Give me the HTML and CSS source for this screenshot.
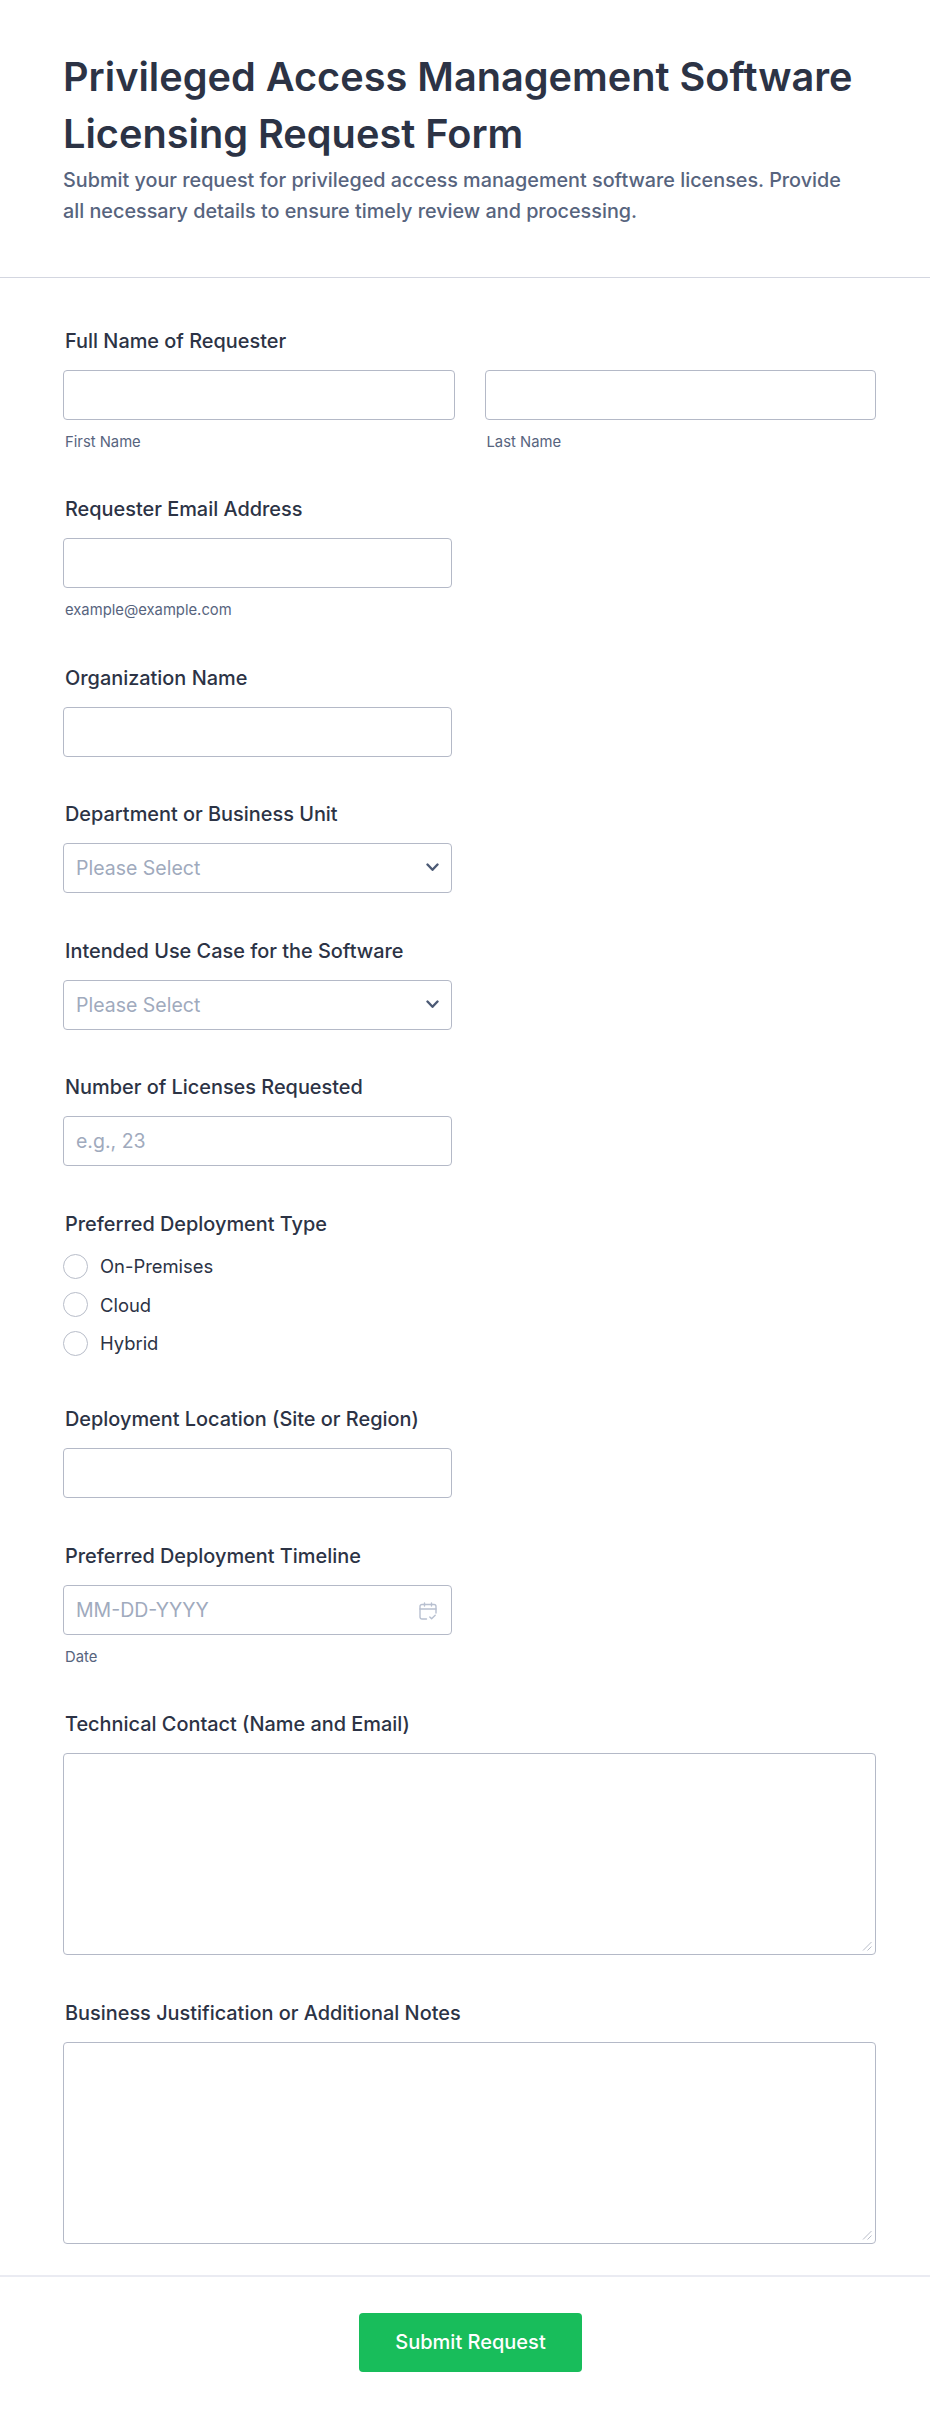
FILE: index.html
```html
<!DOCTYPE html>
<html lang="en">
<head>
<meta charset="utf-8">
<title>Privileged Access Management Software Licensing Request Form</title>
<link rel="stylesheet" href="styles.css">
</head>
<body>
<form class="form">
  <header class="head">
    <h1 class="title">Privileged Access Management Software Licensing Request Form</h1>
    <p class="subtitle">Submit your request for privileged access management software licenses. Provide all necessary details to ensure timely review and processing.</p>
  </header>
  <div class="fields">
    <div class="field">
      <div class="label">Full Name of Requester</div>
      <div class="name-row">
        <div class="name-col"><input class="control control-full" type="text"><div class="sub">First Name</div></div>
        <div class="name-col"><input class="control control-full" type="text"><div class="sub">Last Name</div></div>
      </div>
    </div>
    <div class="field">
      <div class="label">Requester Email Address</div>
      <input class="control" type="text">
      <div class="sub">example@example.com</div>
    </div>
    <div class="field">
      <div class="label">Organization Name</div>
      <input class="control" type="text">
    </div>
    <div class="field">
      <div class="label">Department or Business Unit</div>
      <div class="wrap">
        <select class="control select"><option>Please Select</option></select>
        <svg class="chevron" width="13" height="9" viewBox="0 0 13 9"><path d="M1.5 1.5 6.500 6.800l5-5.300" fill="none" stroke="#4c5a75" stroke-width="2.4" stroke-linecap="round" stroke-linejoin="round"/></svg>
      </div>
    </div>
    <div class="field">
      <div class="label">Intended Use Case for the Software</div>
      <div class="wrap">
        <select class="control select"><option>Please Select</option></select>
        <svg class="chevron" width="13" height="9" viewBox="0 0 13 9"><path d="M1.5 1.5 6.500 6.800l5-5.300" fill="none" stroke="#4c5a75" stroke-width="2.4" stroke-linecap="round" stroke-linejoin="round"/></svg>
      </div>
    </div>
    <div class="field">
      <div class="label">Number of Licenses Requested</div>
      <input class="control" type="text" placeholder="e.g., 23">
    </div>
    <div class="field field-radio">
      <div class="label">Preferred Deployment Type</div>
      <div class="radios">
        <label class="radio"><span class="dot"></span>On-Premises</label>
        <label class="radio"><span class="dot"></span>Cloud</label>
        <label class="radio"><span class="dot"></span>Hybrid</label>
      </div>
    </div>
    <div class="field">
      <div class="label">Deployment Location (Site or Region)</div>
      <input class="control" type="text">
    </div>
    <div class="field">
      <div class="label">Preferred Deployment Timeline</div>
      <div class="wrap">
        <input class="control" type="text" placeholder="MM-DD-YYYY">
        <svg class="calendar" width="18" height="18" viewBox="0 0 18 18" fill="none" stroke="#b8c0d0" stroke-width="1.4" stroke-linecap="round" stroke-linejoin="round"><path d="M7.5 17H3a2 2 0 0 1-2-2V4.500a2 2 0 0 1 2-2h12a2 2 0 0 1 2 2V11"/><path d="M1 7h16M5.500 1v3M12.500 1v3"/><path d="m10.800 15 1.800 1.800 3.600-3.600"/></svg>
      </div>
      <div class="sub">Date</div>
    </div>
    <div class="field">
      <div class="label">Technical Contact (Name and Email)</div>
      <div class="area-wrap">
        <textarea class="area"></textarea>
        <svg class="grip" width="10" height="10" viewBox="0 0 10 10" fill="none" stroke="#b8bdc9" stroke-width="1"><path d="M1 9.500 9.500 1M5.500 9.500 9.500 5.500"/></svg>
      </div>
    </div>
    <div class="field">
      <div class="label">Business Justification or Additional Notes</div>
      <div class="area-wrap">
        <textarea class="area"></textarea>
        <svg class="grip" width="10" height="10" viewBox="0 0 10 10" fill="none" stroke="#b8bdc9" stroke-width="1"><path d="M1 9.500 9.500 1M5.500 9.500 9.500 5.500"/></svg>
      </div>
    </div>
  </div>
  <footer class="foot">
    <button class="submit" type="button">Submit Request</button>
  </footer>
</form>
</body>
</html>
```
FILE: styles.css
```css
* { box-sizing: border-box; }
html, body { margin: 0; padding: 0; background: #fff; }
body { font-family: Inter, "Liberation Sans", sans-serif; color: #2c3345; }
.form { width: 930px; height: 2420px; }
.head { height: 278px; padding: 49px 63px 0; border-bottom: 1px solid #d3d6e0; }
.title { margin: 0; font-size: 39.7px; line-height: 57px; font-weight: 600; color: #2c3345; width: 810px; }
.subtitle { margin: 2px 0 0; font-size: 19.8px; line-height: 31px; font-weight: 500; color: #57647e; width: 800px; }
.fields { padding: 51px 54px 0 63px; display: flex; flex-direction: column; }
.field { margin-bottom: 45.45px; }
.field:last-child { margin-bottom: 31px; }
.field-radio { padding-bottom: 6px; }
.field-radio .label { margin-bottom: 18px; }
.label { margin: 0 0 17px 2px; font-size: 19.9px; line-height: 24px; font-weight: 500; color: #2c3345; }
.control { display: block; width: 389px; height: 50px; padding: 0 12px; border: 1px solid #b4b9c7; border-radius: 4px; background: #fff; font: 400 19.5px Inter, sans-serif; color: #2c3345; outline: none; }
.control-full { width: 100%; }
.control::placeholder { color: #a0aabd; opacity: 1; }
.select { appearance: none; color: #a0aabd; }
.wrap { position: relative; width: 389px; }
.chevron { position: absolute; right: 13px; top: 20px; }
.calendar { position: absolute; right: 15px; top: 17px; }
.name-row { display: flex; gap: 30px; }
.name-col { flex: 1; }
.sub { margin: 13px 0 1px 2px; font-size: 14.8px; line-height: 18px; color: #57647e; }
.radios { display: flex; flex-direction: column; gap: 13.6px; }
.radio { display: flex; align-items: center; gap: 12px; height: 25px; font-size: 18.4px; color: #2c3345; }
.dot { width: 25px; height: 25px; border: 1px solid #b8bdc9; border-radius: 50%; background: #fff; }
.area-wrap { position: relative; width: 813px; }
.area { display: block; width: 813px; height: 202px; border: 1px solid #b4b9c7; border-radius: 4px; background: #fff; outline: none; resize: none; }
.grip { position: absolute; right: 4px; bottom: 4px; }
.foot { padding-top: 36px; border-top: 2px solid #eaebf2; display: flex; justify-content: center; }
.submit { width: 223px; height: 59px; margin-left: 11px; border: 0; border-radius: 4px; background: #18bd5b; color: #fff; font: 500 20px Inter, sans-serif; }
```
